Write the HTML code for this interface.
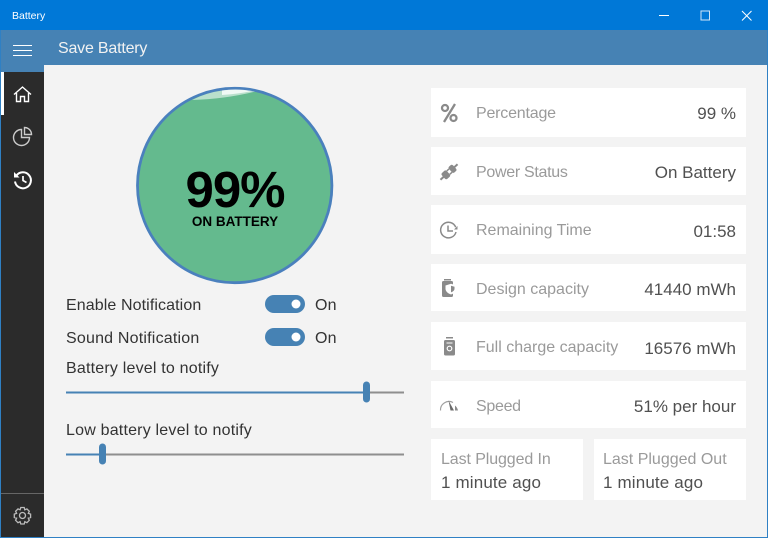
<!DOCTYPE html>
<html><head><meta charset="utf-8"><style>
html,body{margin:0;padding:0;width:768px;height:538px;overflow:hidden;background:#f3f3f3;font-family:"Liberation Sans",sans-serif}
.a{position:absolute}
.t{position:absolute;white-space:nowrap;line-height:20px;z-index:2}
.card{position:absolute;background:#fff;left:431px;width:315px;height:49px}
.l{color:#9a9a9a;font-size:16px;left:476px}
.v{color:#505050;font-size:17px;right:32px}
.k{color:#333;font-size:16px;left:66px;letter-spacing:.2px}
svg{position:absolute;left:0;top:0}
</style></head><body>
<div class="a" style="left:0;top:0;width:768px;height:30px;background:#0078d7"></div>
<div class="t" style="left:12px;top:6px;font-size:10.500px;color:#fff;line-height:20px">Battery</div>
<div class="a" style="left:0;top:30px;width:768px;height:35px;background:#4682b4"></div>
<div class="a" style="left:0;top:65px;width:44px;height:7px;background:#4682b4"></div>
<div class="t" style="left:58px;top:39px;font-size:16px;color:#f2f2f2;letter-spacing:-.2px">Save Battery</div>
<div class="a" style="left:1px;top:72px;width:43px;height:465px;background:#2b2b2b"></div>
<div class="a" style="left:1px;top:72px;width:3px;height:43px;background:#fff"></div>
<div class="a" style="left:1px;top:493px;width:43px;height:1px;background:#666"></div>
<div class="a" style="left:0;top:30px;width:1px;height:508px;background:#2f80c4"></div>
<div class="a" style="left:767px;top:30px;width:1px;height:508px;background:#2f80c4"></div>
<div class="a" style="left:0;top:537px;width:768px;height:1px;background:#2f80c4"></div>

<div class="card" style="top:88px"></div><div class="card" style="top:147px;height:48px"></div><div class="card" style="top:205px"></div><div class="card" style="top:264px;height:47px"></div><div class="card" style="top:322px;height:48px"></div><div class="card" style="top:381px;height:47px"></div>
<div class="card" style="top:439px;width:152px;height:61px"></div><div class="card" style="left:594px;top:439px;width:152px;height:61px"></div>

<div class="t l" style="top:104px;letter-spacing:-.2px">Percentage</div><div class="t v" style="top:104px">99 %</div>
<div class="t l" style="top:163px;letter-spacing:-.3px">Power Status</div><div class="t v" style="top:163px">On Battery</div>
<div class="t l" style="top:221px">Remaining Time</div><div class="t v" style="top:222px">01:58</div>
<div class="t l" style="top:280px">Design capacity</div><div class="t v" style="top:280px">41440 mWh</div>
<div class="t l" style="top:338px">Full charge capacity</div><div class="t v" style="top:339px">16576 mWh</div>
<div class="t l" style="top:397px;letter-spacing:-.3px">Speed</div><div class="t v" style="top:397px">51% per hour</div>
<div class="t l" style="left:441px;top:450px;letter-spacing:-.1px">Last Plugged In</div><div class="t v" style="left:441px;right:auto;top:473px;letter-spacing:.15px">1 minute ago</div>
<div class="t l" style="left:603px;top:450px">Last Plugged Out</div><div class="t v" style="left:603px;right:auto;top:473px;letter-spacing:.15px">1 minute ago</div>

<div class="t k" style="top:296px;letter-spacing:.1px">Enable Notification</div><div class="t k" style="left:315px;top:296px">On</div>
<div class="t k" style="top:329px">Sound Notification</div><div class="t k" style="left:315px;top:329px">On</div>
<div class="t k" style="top:359px">Battery level to notify</div>
<div class="t k" style="top:421px">Low battery level to notify</div>
<div class="t" style="left:135px;top:162px;width:200px;text-align:center;font-size:51px;line-height:56px;font-weight:bold;color:#000;letter-spacing:-1px">99%</div>
<div class="t" style="left:135px;top:212px;width:200px;text-align:center;font-size:13.500px;font-weight:bold;color:#000">ON BATTERY</div>

<svg width="768" height="538" viewBox="0 0 768 538">
<g stroke="#fff" fill="none" stroke-width="1"><path d="M659 15.500h10"/><rect x="701" y="11" width="8.500" height="9" stroke="#cfe4f7"/><path d="M742 11l9.500 9.500M751.500 11l-9.500 9.500"/></g>
<path d="M13 45.500h19M13 50.500h19M13 55.500h19" stroke="#fff" stroke-width="1"/>
<g fill="none" stroke="#fff" stroke-width="1.400">
<path d="M14 94.500l8.500-7.500 8.500 7.500M16.500 93v8.500h4v-5h4v5h4V93"/>
<path d="M21.500 129.500a8 8 0 1 0 8 8h-8z" stroke="#ccc"/><path d="M24.500 127.500a7 7 0 0 1 7 7h-7z" stroke="#ccc"/>
<path d="M16.500 175.500a8 8 0 1 1-1.500 6" stroke-width="2"/><path d="M23 176v4.500l3.500 2" stroke-width="1.700"/>
</g>
<path d="M14 172v5.500h5.500z" fill="#fff"/>
<g fill="none" stroke="#bbb" stroke-width="1.300"><circle cx="22.500" cy="515.500" r="3"/><path d="M20.800 507.500h3.400l.6 2.300 2.100-.9 2.400 2.400-1 2.100 2.300.7v3.400l-2.300.7 1 2.100-2.400 2.400-2.100-1-.6 2.300h-3.400l-.7-2.300-2.100 1-2.400-2.400 1-2.100-2.300-.7v-3.400l2.300-.7-1-2.100 2.400-2.400 2.100.9z"/></g>

<circle cx="234.700" cy="185.500" r="97.200" fill="#64ba8e" stroke="#4a80bd" stroke-width="2.800"/>
<path d="M192 100A96 96 0 0 1 255 91.600Q225 99 192 100z" fill="#fff" opacity=".55"/>
<path d="M222 90.500A96 96 0 0 1 252 91Q238 94 222 95z" fill="#fff" opacity=".8"/>

<!-- percent -->
<g fill="none" stroke="#8a8a8a" stroke-width="2.300"><circle cx="445" cy="108" r="3"/><circle cx="453.500" cy="118" r="3"/><path d="M455 104l-11 18"/></g>
<!-- plug -->
<g fill="#8a8a8a" transform="rotate(-42 449 172)">
<rect x="437.500" y="171" width="5" height="2"/><rect x="441.500" y="168" width="6.500" height="8" rx="2"/><rect x="448" y="169" width="3" height="1.500"/><rect x="448" y="173.500" width="3" height="1.500"/><rect x="451" y="168" width="5.500" height="8" rx="2"/><rect x="456" y="171" width="4.500" height="2"/>
</g>
<!-- clock -->
<g fill="none" stroke="#8a8a8a" stroke-width="1.500"><path d="M455.700 227.200A7.800 7.800 0 1 0 456 232"/><path d="M448 225.500v5.500h5"/></g>
<path d="M457.500 226v3.500h-3.500z" fill="#8a8a8a"/>
<!-- design capacity -->
<g fill="#8a8a8a"><rect x="444" y="279" width="7" height="1.500"/><rect x="442" y="281" width="11" height="16" rx="1.500"/></g>
<path d="M451 283.800l5.500 1.700v3c0 3-2.200 4.800-5.500 6-3.300-1.200-5.500-3-5.500-6v-3z" fill="#fff"/>
<path d="M451 285.800l3.500 1v1.700c0 2-1.400 3-3.500 3.900z" fill="#8a8a8a"/>
<!-- full charge -->
<g fill="#8a8a8a"><rect x="446" y="337" width="7" height="1.500"/><rect x="444" y="340" width="11" height="15.500" rx="1.500"/></g>
<rect x="446.500" y="342.500" width="6" height="1" fill="#fff"/><circle cx="449.500" cy="348.500" r="2.300" fill="none" stroke="#fff" stroke-width="1.200"/>
<!-- speed -->
<path d="M440.500 410.500A8.500 8.500 0 0 1 453 402.500" fill="none" stroke="#a0a0a0" stroke-width="1.200"/>
<path d="M448.500 400.500l5.500 10h-3.500z" fill="#6a6a6a"/>
<path d="M455 405.500a8.500 8.500 0 0 1 3 5h-3z" fill="#8a8a8a"/>

<rect x="265" y="295" width="40" height="18" rx="9" fill="#4682b4"/><circle cx="296" cy="304" r="4.500" fill="#fff"/>
<rect x="265" y="328" width="40" height="18" rx="9" fill="#4682b4"/><circle cx="296" cy="337" r="4.500" fill="#fff"/>
<rect x="66" y="391.500" width="338" height="2" fill="#8e8e8e"/><rect x="66" y="391.500" width="301" height="2" fill="#4682b4"/><rect x="363" y="381.500" width="7" height="21" rx="3.500" fill="#4682b4"/>
<rect x="66" y="453.500" width="338" height="2" fill="#8e8e8e"/><rect x="66" y="453.500" width="37" height="2" fill="#4682b4"/><rect x="99" y="443.500" width="7" height="21" rx="3.500" fill="#4682b4"/>
</svg>
</body></html>
